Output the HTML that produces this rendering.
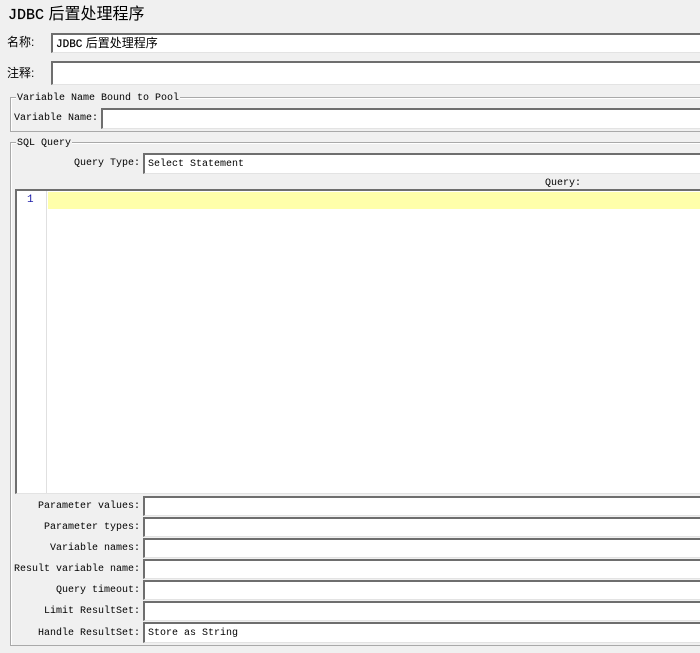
<!DOCTYPE html>
<html><head><meta charset="utf-8"><style>
*{margin:0;padding:0;box-sizing:border-box}
body{width:700px;height:653px;overflow:hidden;background:#f0f0f0;position:relative;font-family:"Liberation Mono","Noto Serif CJK SC",monospace;font-size:10px;color:#000}
.a{position:absolute;white-space:nowrap}
.in{position:absolute;background:#fff;border-top:2px solid #6e6e6e;border-left:2px solid #6e6e6e;border-bottom:1px solid #e3e3e3;border-right:0;padding-left:3px;padding-top:1px;line-height:17px}
.fs{position:absolute;border:1px solid #a9a9a9;border-right:0;box-shadow:inset 1px 1px 0 #fff}
.lg{position:absolute;background:#f0f0f0;padding:0 1px;line-height:11px;top:0}
.cj{font-family:"Liberation Sans","Noto Sans CJK SC",sans-serif}
.r{text-align:right;width:139px;left:1px}
</style></head><body>
<div class="a cj" style="left:8px;top:5px;font-size:16px;line-height:20px"><span style="font-family:'Liberation Mono',monospace;font-size:15px;-webkit-text-stroke:0.2px #000">JDBC</span> 后置处理程序</div>
<div class="a cj" style="left:7px;top:34px;font-size:12px;line-height:16px">名称:</div>
<div class="in cj" style="left:51px;top:33px;width:660px;height:20px;font-size:12px;line-height:16px;padding-top:0"><span style="font-family:'Liberation Mono',monospace;font-size:11px;-webkit-text-stroke:0.2px #000">JDBC</span> 后置处理程序</div>
<div class="a cj" style="left:7px;top:65px;font-size:12px;line-height:16px">注释:</div>
<div class="in" style="left:51px;top:61px;width:660px;height:24px"></div>

<div class="fs" style="left:10px;top:97px;width:700px;height:35px"></div>
<div class="lg" style="left:16px;top:93px">Variable Name Bound to Pool</div>
<div class="a" style="left:14px;top:113px">Variable Name:</div>
<div class="in" style="left:101px;top:108px;width:610px;height:21px"></div>

<div class="fs" style="left:10px;top:142px;width:700px;height:504px"></div>
<div class="lg" style="left:16px;top:138px">SQL Query</div>
<div class="a" style="left:74px;top:158px">Query Type:</div>
<div class="in" style="left:143px;top:153px;width:570px;height:21px">Select Statement</div>
<div class="a" style="left:545px;top:178px">Query:</div>
<div style="position:absolute;left:15px;top:189px;width:700px;height:305px;border-top:2px solid #6e6e6e;border-left:2px solid #6e6e6e;border-bottom:1px solid #e3e3e3;background:#fff">
<div style="position:absolute;left:0;top:0;width:30px;height:302px;border-right:1px solid #e0e0e0"></div>
<div style="position:absolute;left:31px;top:1px;width:680px;height:17px;background:#ffffaa"></div>
<div class="a" style="left:10px;top:3px;color:#1c1ca8;font-size:11px">1</div>
</div>

<div class="a r" style="top:501px">Parameter values:</div>
<div class="in" style="left:143px;top:496px;width:570px;height:20px"></div>
<div class="a r" style="top:522px">Parameter types:</div>
<div class="in" style="left:143px;top:517px;width:570px;height:20px"></div>
<div class="a r" style="top:543px">Variable names:</div>
<div class="in" style="left:143px;top:538px;width:570px;height:20px"></div>
<div class="a r" style="top:564px;left:0;width:140px">Result variable name:</div>
<div class="in" style="left:143px;top:559px;width:570px;height:20px"></div>
<div class="a r" style="top:585px">Query timeout:</div>
<div class="in" style="left:143px;top:580px;width:570px;height:20px"></div>
<div class="a r" style="top:606px">Limit ResultSet:</div>
<div class="in" style="left:143px;top:601px;width:570px;height:20px"></div>
<div class="a r" style="top:628px">Handle ResultSet:</div>
<div class="in" style="left:143px;top:622px;width:570px;height:21px">Store as String</div>
</body></html>
